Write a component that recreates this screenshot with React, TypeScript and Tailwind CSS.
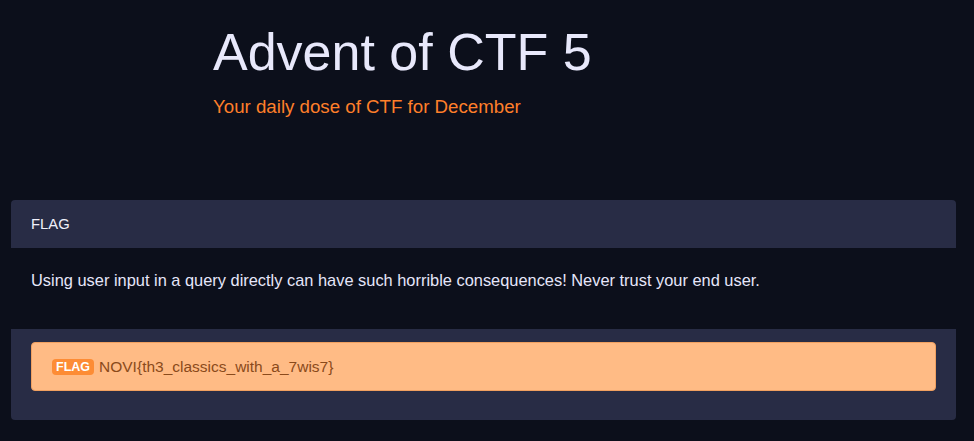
export default function App() {
  return (
    <main className="min-h-screen bg-[#0c0f1b] font-['Liberation_Sans',Arial,sans-serif] text-[#e6e6fa]">
      <header className="pl-[213px] pt-[22px]">
        <h1 className="text-[52px] font-light leading-[60px] text-[#e8e8fb]">Advent of CTF 5</h1>
        <p className="mt-[14px] text-[18.7px] leading-[22px] text-[#ff7f2a]">Your daily dose of CTF for December</p>
      </header>

      <section className="ml-[11px] mt-[82px] w-[945px]">
        <div className="flex h-[48px] items-center rounded-t-[4px] bg-[#282c45] px-[20px] text-[14.8px] text-[#f0f0fa]">
          FLAG
        </div>
        <div className="h-[81px] px-[20px] pt-[23px] text-[16.4px] leading-[19px] text-[#e6e6fa]">
          Using user input in a query directly can have such horrible consequences! Never trust your end user.
        </div>
        <div className="rounded-b-[4px] bg-[#282c45] px-[20px] pb-[29px] pt-[13px]">
          <div className="flex h-[49px] items-center gap-[5px] rounded-[4px] border border-[#f0a060] bg-[#ffbb85] px-[20px] text-[15.5px] text-[#8a4a1b]">
            <span className="rounded-[4px] bg-[#fd8c35] px-[4px] text-[12.5px] font-bold leading-[16px] text-white">FLAG</span>
            <span>NOVI{"{"}th3_classics_with_a_7wis7{"}"}</span>
          </div>
        </div>
      </section>
    </main>
  );
}
